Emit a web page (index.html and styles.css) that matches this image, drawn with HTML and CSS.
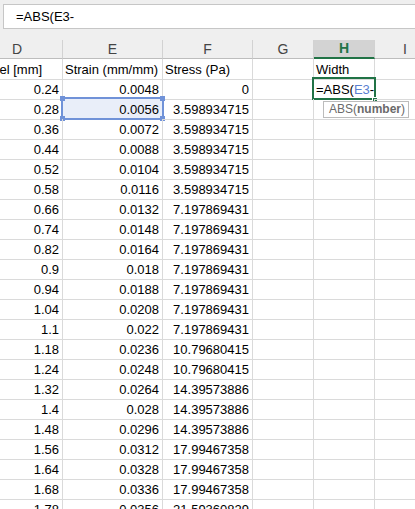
FILE: index.html
```html
<!DOCTYPE html>
<html lang="en">
<head>
    <meta charset="UTF-8">
    <title>Stress Strain Sheet</title>
    <link rel="stylesheet" href="styles.css">
</head>
<body>
    <div class="formula-area">
        <div class="formula-bar">=ABS(E3-</div>
    </div>

    <div class="grid">
        <div class="row col-heads">
            <div>D</div><div>E</div><div>F</div><div>G</div><div class="active">H</div><div>I</div>
        </div>
        <div class="row">
            <div class="txt">Travel [mm]</div><div class="txt">Strain (mm/mm)</div><div class="txt">Stress (Pa)</div><div></div><div class="txt">Width</div><div></div>
        </div>
        <div class="row">
            <div>0.24</div><div>0.0048</div><div>0</div><div></div>
            <div class="txt editing">
                <span>=ABS(</span><span class="ref">E3</span><span>-</span><span class="caret"></span>
                <span class="frame"></span>
                <span class="handle"></span>
                <div class="tip">ABS(<b>number</b>)</div>
            </div>
            <div></div>
        </div>
        <div class="row">
            <div>0.28</div>
            <div class="in-range">0.0056
                <span class="range"></span>
                <span class="dot tl"></span><span class="dot tr"></span><span class="dot bl"></span><span class="dot br"></span>
            </div>
            <div>3.598934715</div><div></div><div></div><div></div>
        </div>
        <div class="row"><div>0.36</div><div>0.0072</div><div>3.598934715</div><div></div><div></div><div></div></div>
        <div class="row"><div>0.44</div><div>0.0088</div><div>3.598934715</div><div></div><div></div><div></div></div>
        <div class="row"><div>0.52</div><div>0.0104</div><div>3.598934715</div><div></div><div></div><div></div></div>
        <div class="row"><div>0.58</div><div>0.0116</div><div>3.598934715</div><div></div><div></div><div></div></div>
        <div class="row"><div>0.66</div><div>0.0132</div><div>7.197869431</div><div></div><div></div><div></div></div>
        <div class="row"><div>0.74</div><div>0.0148</div><div>7.197869431</div><div></div><div></div><div></div></div>
        <div class="row"><div>0.82</div><div>0.0164</div><div>7.197869431</div><div></div><div></div><div></div></div>
        <div class="row"><div>0.9</div><div>0.018</div><div>7.197869431</div><div></div><div></div><div></div></div>
        <div class="row"><div>0.94</div><div>0.0188</div><div>7.197869431</div><div></div><div></div><div></div></div>
        <div class="row"><div>1.04</div><div>0.0208</div><div>7.197869431</div><div></div><div></div><div></div></div>
        <div class="row"><div>1.1</div><div>0.022</div><div>7.197869431</div><div></div><div></div><div></div></div>
        <div class="row"><div>1.18</div><div>0.0236</div><div>10.79680415</div><div></div><div></div><div></div></div>
        <div class="row"><div>1.24</div><div>0.0248</div><div>10.79680415</div><div></div><div></div><div></div></div>
        <div class="row"><div>1.32</div><div>0.0264</div><div>14.39573886</div><div></div><div></div><div></div></div>
        <div class="row"><div>1.4</div><div>0.028</div><div>14.39573886</div><div></div><div></div><div></div></div>
        <div class="row"><div>1.48</div><div>0.0296</div><div>14.39573886</div><div></div><div></div><div></div></div>
        <div class="row"><div>1.56</div><div>0.0312</div><div>17.99467358</div><div></div><div></div><div></div></div>
        <div class="row"><div>1.64</div><div>0.0328</div><div>17.99467358</div><div></div><div></div><div></div></div>
        <div class="row"><div>1.68</div><div>0.0336</div><div>17.99467358</div><div></div><div></div><div></div></div>
        <div class="row"><div>1.78</div><div>0.0356</div><div>21.59360829</div><div></div><div></div><div></div></div>
    </div>
</body>
</html>
```

FILE: styles.css
```css
* {
    margin: 0;
    padding: 0;
    box-sizing: border-box;
}

body {
    background-color: white;
    font-family: 'Liberation Sans', Arial, sans-serif;
    font-size: 13px;
    color: #000;
    overflow: hidden;
    width: 415px;
    height: 509px;
}

.formula-area {
    background-color: #efefef;
    padding: 4px 0 11px 3px;
}

.formula-bar {
    height: 25px;
    background-color: white;
    border: 1px solid #c6c6c6;
    border-right: none;
    padding-left: 12px;
    line-height: 23px;
    font-size: 13px;
}

.grid {
    margin-left: -28px;
    width: 464px;
}

.row {
    display: grid;
    grid-template-columns: 91px 100px 90px 61px 61px 61px;
    height: 20px;
}

.row > div {
    position: relative;
    border-right: 1px solid #dadada;
    border-bottom: 1px solid #dadada;
    text-align: right;
    padding: 2px 3px 0 0;
    line-height: 18px;
    white-space: nowrap;
}

.row > .txt {
    text-align: left;
    padding: 2px 0 0 2px;
}

/* column letters */
.col-heads {
    height: 19px;
    background-color: #efefef;
}

.col-heads > div {
    text-align: center;
    padding: 0;
    line-height: 18px;
    font-size: 14px;
    color: #444;
    border-right: 1px solid #d2d2d2;
    border-bottom: 1px solid #bdbdbd;
}

.col-heads > .active {
    background-color: #d3d3d3;
    color: #217346;
    font-weight: bold;
    border-bottom: 2px solid #217346;
    line-height: 17px;
}

/* cell being edited */
.editing .ref {
    color: #5a7fd0;
}

.caret {
    display: inline-block;
    width: 1px;
    height: 15px;
    background-color: #000;
    vertical-align: -3px;
    margin-left: 1px;
}

.frame {
    position: absolute;
    top: -2px;
    left: -2px;
    right: -2px;
    bottom: -1px;
    border: 2px solid #217346;
}

.handle {
    position: absolute;
    right: -4px;
    bottom: -4px;
    width: 6px;
    height: 6px;
    background-color: #217346;
    border: 1px solid white;
}

.tip {
    position: absolute;
    top: 22px;
    left: 9px;
    width: 86px;
    height: 17px;
    background-color: white;
    border: 1px solid #bcbcbc;
    color: #6a6a6a;
    font-size: 12px;
    line-height: 15px;
    padding-left: 5px;
    z-index: 2;
}

/* referenced range */
.in-range {
    background-color: #e9eef9;
}

.range {
    position: absolute;
    top: -2px;
    left: -2px;
    right: -2px;
    bottom: -1px;
    border: 2px solid #7092d8;
}

.dot {
    position: absolute;
    width: 5px;
    height: 5px;
    background-color: #7092d8;
}

.dot.tl { top: -3px; left: -3px; }
.dot.tr { top: -3px; right: -3px; }
.dot.bl { bottom: -2px; left: -3px; }
.dot.br { bottom: -2px; right: -3px; }
```
